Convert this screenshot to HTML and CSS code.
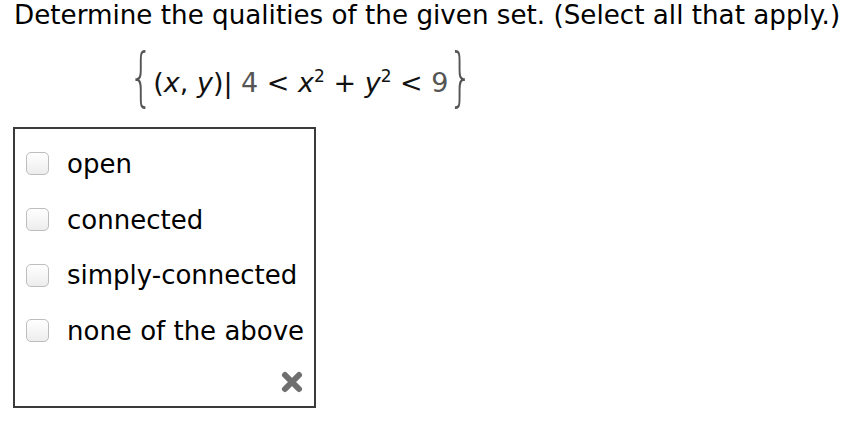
FILE: index.html
```html
<!DOCTYPE html>
<html>
<head>
<meta charset="utf-8">
<link rel="stylesheet" href="styles.css">
</head>
<body>
<p class="title">Determine the qualities of the given set. (Select all that apply.)</p>
<div class="formula">
  <span class="brace">{</span>
  <span class="expr">(<i>x</i>, <i>y</i>)| <span class="num">4</span> &lt; <i>x</i><sup>2</sup> + <i>y</i><sup>2</sup> &lt; <span class="num">9</span></span>
  <span class="brace">}</span>
</div>
<div class="box">
  <ul class="options">
    <li class="option"><span class="check"></span><span class="label">open</span></li>
    <li class="option"><span class="check"></span><span class="label">connected</span></li>
    <li class="option"><span class="check"></span><span class="label">simply-connected</span></li>
    <li class="option"><span class="check"></span><span class="label">none of the above</span></li>
  </ul>
  <div class="mark">
    <svg width="26" height="26" viewBox="0 0 26 26">
      <path d="M6 6 L20 20 M20 6 L6 20" stroke="#6f6f6f" stroke-width="6" stroke-linecap="round" fill="none"/>
    </svg>
  </div>
</div>
</body>
</html>
```
FILE: styles.css
```css
html, body {
  margin: 0;
  padding: 0;
  background: #fff;
  color: #000;
  font-family: "DejaVu Sans", Verdana, sans-serif;
}
.title {
  margin: 0;
  padding: 0 0 0 14px;
  font-size: 26.2px;
  line-height: 30px;
  white-space: nowrap;
}
.formula {
  display: flex;
  align-items: center;
  padding-left: 129px;
  height: 80px;
  margin-top: 10px;
  font-size: 27px;
  white-space: nowrap;
}
.brace {
  color: #555;
  font-size: 38px;
  font-weight: 200;
  display: inline-block;
  transform: scaleY(1.7);
  line-height: 1;
  position: relative;
  top: -3px;
}
.expr {
  color: #111;
  position: relative;
  top: 2px;
  white-space: pre;
}
.expr i {
  font-style: oblique;
}
.expr sup {
  font-size: 17px;
  vertical-align: 10px;
  line-height: 0;
}
.num {
  color: #555;
}
.box {
  margin: 7px 0 0 13px;
  width: 299px;
  height: 277px;
  border: 2px solid #3a3a3a;
  position: relative;
}
.options {
  list-style: none;
  margin: 0;
  padding: 7px 0 0 11px;
}
.option {
  display: flex;
  align-items: center;
  height: 55.7px;
}
.check {
  width: 21px;
  height: 21px;
  border: 1px solid #bdbdbd;
  border-radius: 5px;
  background: linear-gradient(#fff, #ededed);
  flex: none;
}
.label {
  margin-left: 18px;
  font-size: 26px;
  line-height: 30px;
}
.mark {
  position: absolute;
  right: 9px;
  bottom: 11px;
  width: 26px;
  height: 26px;
  filter: blur(0.6px);
}
```
